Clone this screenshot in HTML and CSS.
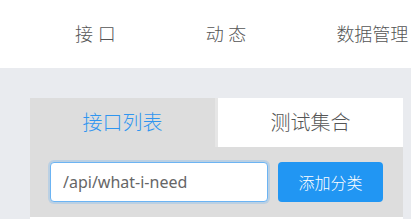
FILE: index.html
```html
<!DOCTYPE html>
<html lang="zh-CN">
<head>
  <meta charset="UTF-8">
  <title>接口管理</title>
  <link rel="stylesheet" href="styles.css">
</head>
<body>
  <!-- 顶部导航 -->
  <div class="nav">
    <a class="nav-item active">接 口</a>
    <a class="nav-item">动 态</a>
    <a class="nav-item">数据管理</a>
  </div>

  <div class="main">
    <div class="panel">
      <div class="panel-tabs">
        <div class="panel-tab active">接口列表</div>
        <div class="panel-tab">测试集合</div>
      </div>
      <div class="panel-body">
        <input class="search" type="text" value="/api/what-i-need">
        <button class="btn-add">添加分类</button>
      </div>
      <div class="list"></div>
    </div>
  </div>
</body>
</html>
```

FILE: styles.css
```css
* {
  margin: 0;
  padding: 0;
  box-sizing: border-box;
}

body {
  font-family: "Noto Sans", "Noto Sans CJK SC", sans-serif;
  font-weight: 300;
  background: #e9ebef;
  color: #555;
  width: 411px;
  height: 219px;
  overflow: hidden;
}

/* Nav */
.nav {
  display: flex;
  height: 68px;
  padding-left: 30px;
  background: #fff;
  overflow: hidden;
}

.nav-item {
  flex-shrink: 0;
  padding: 0 45px;
  line-height: 68px;
  font-size: 18px;
  color: #555;
  white-space: nowrap;
}

.nav-item.active {
  box-shadow: 0 2px 0 #2196f3;
}

/* Main */
.main {
  padding: 30px 0 0 30px;
}

.panel {
  width: 373px;
}

.panel-tabs {
  display: flex;
  height: 49px;
  background: #e6e6e6;
}

.panel-tab {
  width: 185px;
  line-height: 49px;
  text-align: center;
  font-size: 20px;
  color: #555;
  background: #fff;
}

.panel-tab.active {
  margin-right: 3px;
  color: #2f95f0;
  background: #dddddd;
}

.panel-body {
  display: flex;
  gap: 10px;
  padding: 15px 20px;
  background: #dddddd;
}

.search {
  width: 218px;
  height: 40px;
  padding: 0 12px;
  border: 1px solid #6cb4f3;
  border-radius: 4px;
  box-shadow: 0 0 0 2px rgba(108, 180, 243, 0.3);
  font-family: inherit;
  font-weight: 400;
  font-size: 16px;
  color: #666;
  outline: none;
}

.btn-add {
  width: 107px;
  height: 40px;
  border: none;
  border-radius: 4px;
  background: #2196f3;
  color: #fff;
  font-family: inherit;
  font-weight: 300;
  font-size: 16px;
}

.list {
  height: 20px;
  background: #fff;
}
```
